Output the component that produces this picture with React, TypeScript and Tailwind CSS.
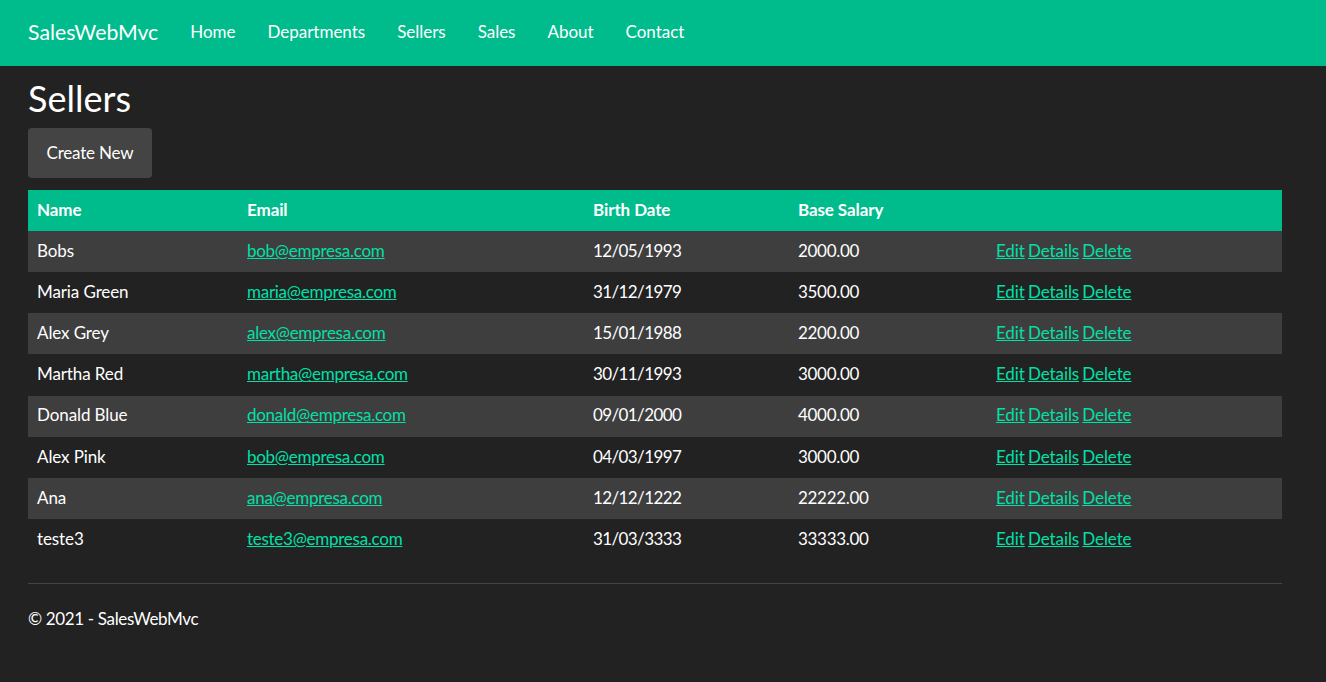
const sellers = [
  ['Bobs', 'bob@empresa.com', '12/05/1993', '2000.00'],
  ['Maria Green', 'maria@empresa.com', '31/12/1979', '3500.00'],
  ['Alex Grey', 'alex@empresa.com', '15/01/1988', '2200.00'],
  ['Martha Red', 'martha@empresa.com', '30/11/1993', '3000.00'],
  ['Donald Blue', 'donald@empresa.com', '09/01/2000', '4000.00'],
  ['Alex Pink', 'bob@empresa.com', '04/03/1997', '3000.00'],
  ['Ana', 'ana@empresa.com', '12/12/1222', '22222.00'],
  ['teste3', 'teste3@empresa.com', '31/03/3333', '33333.00'],
];

const navLinks = ['Home', 'Departments', 'Sellers', 'Sales', 'About', 'Contact'];

export default function App() {
  return (
    <div className="min-h-[682px] bg-[#222222] text-white font-['Lato','Liberation_Sans',sans-serif] text-[17px] leading-[24px]">
      {/* Navbar */}
      <nav className="h-[66px] bg-[#00bc8c] px-[28px] pb-[2px] flex items-center">
        <span className="text-[21.25px] mr-[32px]">SalesWebMvc</span>
        <div className="flex gap-[32px] tracking-[-0.02px]">
          {navLinks.map((l) => (
            <a key={l}>{l}</a>
          ))}
        </div>
      </nav>

      <div className="px-[28px] w-[1310px]">
        <h1 className="text-[36px] leading-[40px] font-normal pt-[12px] mb-[10px]">Sellers</h1>
        <button className="h-[50px] w-[124px] bg-[#444444] rounded-[4px] tracking-[-0.2px]">Create New</button>

        <table className="w-full mt-[12px] border-collapse">
          <thead>
            <tr className="bg-[#00bc8c] h-[41px] text-left font-bold">
              <th className="pl-[9px] pb-[2px] w-[210px] tracking-[-0.1px]">Name</th>
              <th className="pl-[9px] pb-[2px] w-[346px] tracking-[-0.1px]">Email</th>
              <th className="pl-[9px] pb-[2px] w-[205px] tracking-[-0.1px]">Birth Date</th>
              <th className="pl-[9px] pb-[2px] w-[198px] tracking-[-0.1px]">Base Salary</th>
              <th></th>
            </tr>
          </thead>
          <tbody>
            {sellers.map((s, i) => (
              <tr key={i} className={i % 2 === 0 ? 'bg-[#3e3e3e] h-[41.14px]' : 'h-[41.14px]'}>
                <td className="pl-[9px] pb-[1.16px] tracking-[-0.1px]">{s[0]}</td>
                <td className="pl-[9px] pb-[1.16px] tracking-[-0.27px]">
                  <a className="text-[#00e0a8] underline">{s[1]}</a>
                </td>
                <td className="pl-[9px] pb-[1.16px] tracking-[-0.6px]">{s[2]}</td>
                <td className="pl-[9px] pb-[1.16px] tracking-[-0.3px]">{s[3]}</td>
                <td className="pl-[9px] pb-[1.16px] text-[#00e0a8] tracking-[-0.1px] [word-spacing:-1px]">
                  <a className="underline">Edit</a> <a className="underline">Details</a>{' '}
                  <a className="underline">Delete</a>
                </td>
              </tr>
            ))}
          </tbody>
        </table>

        <hr className="mt-[23px] border-t border-[#444444]" />
        <footer className="mt-[23px] tracking-[-0.35px]">© 2021 - SalesWebMvc</footer>
      </div>
    </div>
  );
}
